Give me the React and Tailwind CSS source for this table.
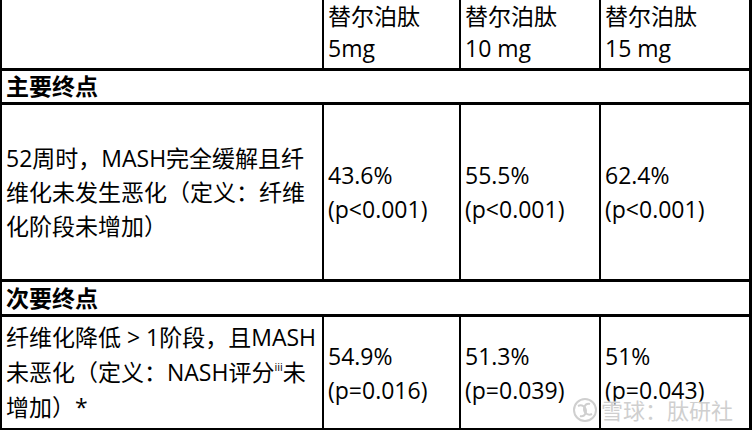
import React from "react";

const font = { fontFamily: '"Open Sans", "Noto Sans CJK SC", sans-serif' };

const doses = [
  ["替尔泊肽", "5mg"],
  ["替尔泊肽", "10 mg"],
  ["替尔泊肽", "15 mg"],
];

const primary = [
  ["43.6%", "(p<0.001)"],
  ["55.5%", "(p<0.001)"],
  ["62.4%", "(p<0.001)"],
];

const secondary = [
  ["54.9%", "(p=0.016)"],
  ["51.3%", "(p=0.039)"],
  ["51%", "(p=0.043)"],
];

const widths = ["w-[137px] border-r-2", "w-[140px] border-r-2", "flex-1"];

const DataCells = ({ rows }) =>
  rows.map((r, i) => (
    <div key={i} className={`${widths[i]} border-black flex flex-col justify-center pl-[4px] leading-[34px]`}>
      <div>{r[0]}</div>
      <div>{r[1]}</div>
    </div>
  ));

const Watermark = () => (
  <div className="absolute left-[572px] top-[397px] flex items-center gap-[3px] text-[#cfcfcf] text-[22px] leading-none [text-shadow:0_0_2px_#fff,0_0_2px_#fff]">
    <svg width="26" height="26" viewBox="0 0 26 26" fill="none" stroke="#cfcfcf" strokeWidth="2">
      <circle cx="13" cy="13" r="11" />
      <path d="M6 9c4-2 8 1 8 5s-3 6-6 5" />
      <path d="M20 17c-4 2-8-1-8-5s3-6 6-5" />
    </svg>
    <span>雪球：肽研社</span>
  </div>
);

export default function App() {
  return (
    <div className="w-[753px] h-[433px] bg-white overflow-hidden relative text-black text-[23px]" style={font}>
      <div className="w-[752px] border-l-2 border-r-[3px] border-b-2 border-black">
        <div className="flex h-[71px] border-b-[3px] border-black">
          <div className="w-[322px] border-r-2 border-black" />
          {doses.map((d, i) => (
            <div key={i} className={`${widths[i]} border-black pl-[4px] leading-[32px]`}>
              <div>{d[0]}</div>
              <div>{d[1]}</div>
            </div>
          ))}
        </div>
        <div className="h-[34px] border-b-[3px] border-black flex items-center pl-[4px] font-bold">
          主要终点
        </div>
        <div className="flex h-[177px] border-b-[3px] border-black">
          <div className="w-[322px] border-r-2 border-black flex flex-col justify-center pl-[4px] leading-[34px]">
            <div>52周时，MASH完全缓解且纤</div>
            <div>维化未发生恶化（定义：纤维</div>
            <div>化阶段未增加）</div>
          </div>
          <DataCells rows={primary} />
        </div>
        <div className="h-[35px] border-b-[3px] border-black flex items-center pl-[4px] font-bold">
          次要终点
        </div>
        <div className="flex h-[111px]">
          <div className="w-[322px] border-r-2 border-black flex flex-col justify-center pl-[4px] leading-[35px] whitespace-nowrap">
            <div>纤维化降低 &gt; 1阶段，且MASH</div>
            <div>
              未恶化（定义：NASH评分<span className="inline-block text-[11px] leading-none align-top mt-[6px]">iii</span>未
            </div>
            <div>增加）*</div>
          </div>
          <DataCells rows={secondary} />
        </div>
      </div>
      <Watermark />
    </div>
  );
}
